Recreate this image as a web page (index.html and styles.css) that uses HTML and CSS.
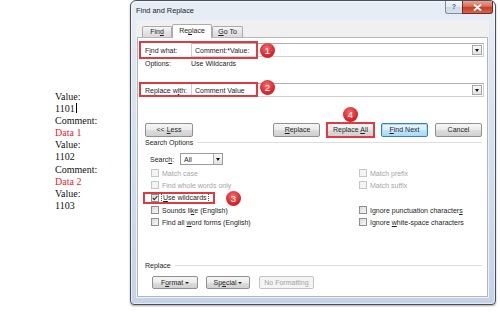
FILE: index.html
```html
<!DOCTYPE html>
<html>
<head>
<meta charset="utf-8">
<link rel="stylesheet" href="styles.css">
</head>
<body>
<div class="page">
  <div class="doc">
    <div>Value:</div>
    <div>1101<span class="caret"></span></div>
    <div>Comment:</div>
    <div class="red">Data 1</div>
    <div>Value:</div>
    <div>1102</div>
    <div>Comment:</div>
    <div class="red">Data 2</div>
    <div>Value:</div>
    <div>1103</div>
  </div>

  <div class="window">
    <div class="titlebar">
      <span class="title">Find and Replace</span>
      <div class="caption">
        <div class="cap-help">?</div>
        <div class="cap-close">
          <svg width="9" height="7" viewBox="0 0 9 7"><path d="M1.5 1 L7.5 6 M7.5 1 L1.5 6" stroke="#fff" stroke-width="1.8" stroke-linecap="round"/></svg>
        </div>
      </div>
    </div>

    <div class="client">
      <div class="tabs">
        <div class="tab t-find">Fin<u>d</u></div>
        <div class="tab t-replace active">Re<u>p</u>lace</div>
        <div class="tab t-goto"><u>G</u>o To</div>
      </div>

      <div class="panel">
        <div class="field f1">
          <span class="flabel">F<u>i</u>nd what:</span>
          <div class="combo"><span>Comment:*Value:</span><span class="dd"></span></div>
          <span class="mark mark1"></span>
          <span class="badge badge1">1</span>
        </div>
        <div class="opts"><span class="flabel">Options:</span><span>Use Wildcards</span></div>
        <div class="field f2">
          <span class="flabel">Replace w<u>i</u>th:</span>
          <div class="combo"><span>Comment Value</span><span class="dd"></span></div>
          <span class="mark mark2"></span>
          <span class="badge badge2">2</span>
        </div>

        <div class="btnrow">
          <div class="btn less">&lt;&lt; <u>L</u>ess</div>
          <div class="btngroup">
            <div class="btn">&nbsp;<u>R</u>eplace</div>
            <div class="btn annot">Replace <u>A</u>ll<span class="mark mark4"></span><span class="badge badge4">4</span></div>
            <div class="btn default"><u>F</u>ind Next</div>
            <div class="btn">Cancel</div>
          </div>
        </div>

        <div class="section">Search Options</div>

        <div class="searchrow">
          <span class="slabel">Searc<u>h</u>:</span>
          <div class="select"><span>All</span><span class="dd"></span></div>
        </div>

        <div class="checks">
          <div class="cb disabled"><span class="box"></span><span>Match case</span></div>
          <div class="cb disabled"><span class="box"></span><span>Match prefix</span></div>
          <div class="cb disabled"><span class="box"></span><span>Find whole words only</span></div>
          <div class="cb disabled"><span class="box"></span><span>Match suffix</span></div>
          <div class="cb wild">
            <span class="box checked"><svg width="6" height="6" viewBox="0 0 6 6"><path d="M0.8 3 L2.4 4.7 L5.3 1" fill="none" stroke="#333" stroke-width="1.1"/></svg></span>
            <span class="focus"><u>U</u>se wildcards</span>
            <span class="mark mark3"></span>
            <span class="badge badge3">3</span>
          </div>
          <div class="cb empty"></div>
          <div class="cb"><span class="box"></span><span>Sounds li<u>k</u>e (English)</span></div>
          <div class="cb"><span class="box"></span><span>Ignore punctuation character<u>s</u></span></div>
          <div class="cb"><span class="box"></span><span>Find all <u>w</u>ord forms (English)</span></div>
          <div class="cb"><span class="box"></span><span>Ignore <u>w</u>hite-space characters</span></div>
        </div>

        <div class="section replace-sec">Replace</div>
        <div class="bottombtns">
          <div class="btn b-format">F<u>o</u>rmat <span class="tri"></span></div>
          <div class="btn b-special">Sp<u>e</u>cial <span class="tri"></span></div>
          <div class="btn b-nofmt disabled-btn">No Formatting</div>
        </div>
      </div>
    </div>
  </div>
</div>
</body>
</html>
```

FILE: styles.css
```css
html, body {
  margin: 0;
  padding: 0;
  background: #ffffff;
}

body {
  width: 500px;
  height: 312px;
  overflow: hidden;
}

.page {
  display: flex;
  height: 312px;
}

/* ---------- document text ---------- */
.doc {
  width: 130px;
  flex-shrink: 0;
  box-sizing: border-box;
  padding: 91px 0 0 55px;
  font-family: "Liberation Serif", "Times New Roman", serif;
  font-size: 10px;
  line-height: 12.1px;
  color: #111;
}

.doc .red {
  color: #e3262d;
}

.caret {
  display: inline-block;
  width: 1px;
  height: 10px;
  background: #000;
  margin-left: 1px;
  vertical-align: -1px;
}

/* ---------- window ---------- */
.window {
  width: 366px;
  height: 305px;
  flex-shrink: 0;
  box-sizing: border-box;
  border: 1px solid #47505b;
  border-radius: 6px 6px 4px 4px;
  background: linear-gradient(#e7eef6, #d6e1ed 40%, #c3d4e7);
  box-shadow: inset 0 0 0 1px rgba(255, 255, 255, 0.55), 0 1px 2px rgba(0, 0, 0, 0.35);
  display: flex;
  flex-direction: column;
  font-family: "Liberation Sans", Arial, sans-serif;
  font-size: 7px;
  color: #1e1e1e;
}

.titlebar {
  height: 19px;
  flex-shrink: 0;
  display: flex;
  justify-content: space-between;
  align-items: flex-start;
  padding: 0 2px 0 5px;
}

.title {
  font-size: 7.4px;
  line-height: 19px;
  color: #1b1b1b;
}

.caption {
  display: flex;
}

.cap-help {
  width: 17px;
  height: 13px;
  box-sizing: border-box;
  border: 1px solid #7f8c9b;
  border-top: none;
  border-right: none;
  border-radius: 0 0 0 3px;
  background: linear-gradient(#f5f8fb, #e0e8f1 50%, #ccd8e5 51%, #d8e2ee);
  color: #5a6470;
  font-size: 7px;
  font-weight: bold;
  line-height: 12px;
  text-align: center;
}

.cap-close {
  width: 31px;
  height: 13px;
  box-sizing: border-box;
  border: 1px solid #6e2c22;
  border-top: none;
  border-radius: 0 0 3px 0;
  background: linear-gradient(#eaa596, #d86a55 45%, #c53d25 55%, #d7674b);
  display: flex;
  align-items: center;
  justify-content: center;
}

/* ---------- client ---------- */
.client {
  flex: 1;
  margin: 0 6px 6px 5px;
  padding: 0 1px 1px 1px;
  background: #f0f0f0;
  display: flex;
  flex-direction: column;
}

.tabs {
  height: 18px;
  margin-bottom: -1px;
  padding-left: 5px;
  display: flex;
  align-items: flex-end;
  flex-shrink: 0;
}

.tab {
  box-sizing: border-box;
  height: 11px;
  margin-bottom: 1px;
  border: 1px solid #a7abb2;
  border-bottom: none;
  border-radius: 2px 2px 0 0;
  background: linear-gradient(#f6f6f6, #e4e4e4 50%, #d9d9d9);
  text-align: center;
  line-height: 10px;
}

.t-find { width: 30px; }
.t-replace { width: 40px; }
.t-goto { width: 31px; }

.tab.active {
  height: 14px;
  margin-bottom: 0;
  background: #ffffff;
  line-height: 12px;
  position: relative;
  z-index: 1;
}

.panel {
  flex: 1;
  background: #ffffff;
  border: 1px solid #b3b6bb;
  display: flex;
  flex-direction: column;
  padding-bottom: 7px;
}

/* ---------- fields ---------- */
.field {
  position: relative;
  display: flex;
  align-items: center;
  height: 14px;
  padding: 0 3px 0 7px;
}

.f1 { margin-top: 5px; }
.f2 { margin-top: 14px; }

.flabel {
  width: 46px;
  flex-shrink: 0;
}

.combo {
  flex: 1;
  height: 14px;
  box-sizing: border-box;
  border: 1px solid #cdd0d4;
  border-top-color: #abaeb3;
  background: #fff;
  display: flex;
  align-items: center;
  justify-content: space-between;
  padding-left: 3px;
}

.dd {
  width: 10px;
  height: 10px;
  box-sizing: border-box;
  border: 1px solid #a8a8a8;
  background: linear-gradient(#f9f9f9, #e3e3e3);
  margin-right: 1px;
  display: flex;
  align-items: center;
  justify-content: center;
}

.dd::after {
  content: "";
  border-left: 2.5px solid transparent;
  border-right: 2.5px solid transparent;
  border-top: 3px solid #111;
}

.opts {
  margin-top: 2px;
  height: 10px;
  line-height: 10px;
  padding-left: 7px;
  display: flex;
}

/* ---------- annotations ---------- */
.mark {
  position: absolute;
  box-sizing: border-box;
  border: 2px solid #df3a3f;
}

.badge {
  position: absolute;
  width: 15px;
  height: 15px;
  border-radius: 50%;
  background: radial-gradient(circle at 45% 35%, #f36c6c, #d9252d 60%, #bd1820);
  color: #fff;
  font-family: "Liberation Sans", Arial, sans-serif;
  font-size: 9.5px;
  line-height: 15px;
  text-align: center;
}

.mark1 { left: 1px; top: -2px; width: 119px; height: 18px; }
.badge1 { left: 122px; top: 0px; }
.mark2 { left: 1px; top: -1px; width: 119px; height: 15px; }
.badge2 { left: 122px; top: -3px; }
.mark3 { left: -8px; top: 0px; width: 72px; height: 12px; }
.badge3 { left: 75px; top: -1px; }
.mark4 { left: -2px; top: -2px; right: -2px; bottom: -2px; }
.badge4 { left: 15px; top: -17px; }

/* ---------- buttons ---------- */
.btnrow {
  margin-top: 26px;
  height: 14px;
  display: flex;
  padding: 0 5px 0 7px;
}

.btngroup {
  margin-left: auto;
  display: flex;
  gap: 7px;
}

.btn {
  box-sizing: border-box;
  width: 47px;
  height: 14px;
  border: 1px solid #8f9090;
  border-radius: 2px;
  background: linear-gradient(#f6f6f6, #ebebeb 50%, #dddddd 51%, #d0d0d0);
  text-align: center;
  line-height: 12px;
  color: #1e1e1e;
  white-space: nowrap;
}

.btn.less { width: 48px; }

.btn.annot {
  position: relative;
}

.btn.default {
  border-color: #3c7fb1;
  box-shadow: inset 0 0 0 1px #a6dcf5;
  background: linear-gradient(#eaf6fd, #d9f0fc 50%, #bee6fd 51%, #a7d9f5);
}

/* ---------- sections ---------- */
.section {
  margin-top: 1px;
  height: 10px;
  line-height: 10px;
  padding: 0 5px 0 7px;
  display: flex;
  align-items: center;
}

.section::after {
  content: "";
  flex: 1;
  height: 1px;
  background: #dedede;
  margin-left: 4px;
  margin-top: -1px;
}

.searchrow {
  margin-top: 5px;
  height: 12px;
  display: flex;
  align-items: center;
  padding-left: 12px;
}

.slabel {
  width: 30px;
}

.select {
  width: 43px;
  height: 12px;
  box-sizing: border-box;
  border: 1px solid #9c9c9c;
  background: #fff;
  display: flex;
  align-items: center;
  justify-content: space-between;
  padding-left: 3px;
}

.select .dd {
  width: 9px;
  height: 10px;
  margin-right: 0;
  border-width: 0 0 0 1px;
}

/* ---------- checkboxes ---------- */
.checks {
  margin-top: 2px;
  padding-left: 13px;
  display: grid;
  grid-template-columns: 208px 1fr;
  grid-auto-rows: 12.3px;
}

.cb {
  display: flex;
  align-items: center;
  gap: 3px;
  white-space: nowrap;
}

.cb.wild {
  position: relative;
}

.box {
  width: 8px;
  height: 8px;
  box-sizing: border-box;
  border: 1px solid #8e8f8f;
  background: linear-gradient(135deg, #d9d9d9, #f9f9f9);
  display: flex;
  align-items: center;
  justify-content: center;
  flex-shrink: 0;
}

.cb.disabled {
  color: #a6a6a6;
}

.cb.disabled .box {
  border-color: #c6c6c6;
  background: #f4f4f4;
}

.focus {
  outline: 1px dotted #555;
  padding: 0 1px;
  line-height: 9px;
}

/* ---------- replace section ---------- */
.replace-sec {
  margin-top: auto;
}

.bottombtns {
  margin-top: 5px;
  height: 13px;
  padding-left: 14px;
  display: flex;
  gap: 8px;
}

.bottombtns .btn {
  height: 13px;
  line-height: 11px;
}

.b-format { width: 46px; }
.b-special { width: 44px; }
.b-nofmt { width: 55px; margin-left: 1px; }

.tri {
  display: inline-block;
  border-left: 2px solid transparent;
  border-right: 2px solid transparent;
  border-top: 2.5px solid #222;
  vertical-align: 1px;
}

.disabled-btn {
  color: #a3a3a3;
  border-color: #c3c3c3;
  background: #f4f4f4;
}

u {
  text-decoration: underline;
  text-underline-offset: 1px;
}
```
